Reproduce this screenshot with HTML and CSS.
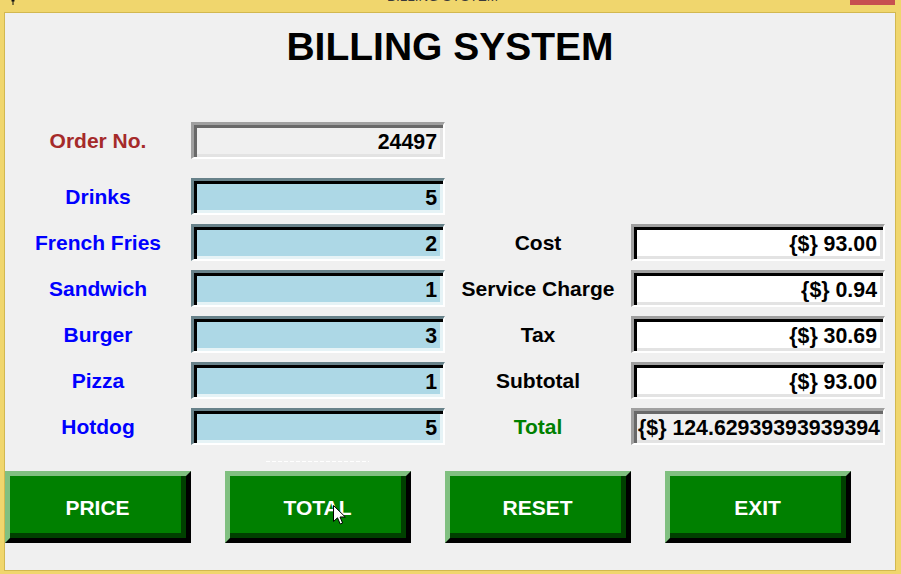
FILE: index.html
```html
<!DOCTYPE html>
<html>
<head>
<meta charset="utf-8">
<title>BILLING SYSTEM</title>
<link rel="stylesheet" href="styles.css">
</head>
<body>
<div class="titlebar">
  <span class="app-icon"><svg width="4" height="12" viewBox="0 0 4 12"><path d="M2 0 V5" stroke="#111" stroke-width="1"/><path d="M0.5 0 H3.5 V1.5 H0.5 Z" fill="#111"/></svg></span>
  <span class="caption">BILLING SYSTEM</span>
  <span class="close-btn"></span>
</div>
<div class="window">
  <h1 class="heading">BILLING SYSTEM</h1>

  <div class="form order-row">
    <div class="label brown">Order No.</div>
    <div class="field readonly">24497</div>
  </div>

  <div class="form items">
    <div class="label blue">Drinks</div>
    <div class="field blue-field">5</div>
    <div class="spacer"></div>

    <div class="label blue">French Fries</div>
    <div class="field blue-field">2</div>
    <div class="label black">Cost</div>
    <div class="field white-field">{$} 93.00</div>

    <div class="label blue">Sandwich</div>
    <div class="field blue-field">1</div>
    <div class="label black">Service Charge</div>
    <div class="field white-field">{$} 0.94</div>

    <div class="label blue">Burger</div>
    <div class="field blue-field">3</div>
    <div class="label black">Tax</div>
    <div class="field white-field">{$} 30.69</div>

    <div class="label blue">Pizza</div>
    <div class="field blue-field">1</div>
    <div class="label black">Subtotal</div>
    <div class="field white-field">{$} 93.00</div>

    <div class="label blue">Hotdog</div>
    <div class="field blue-field">5</div>
    <div class="label green">Total</div>
    <div class="field readonly total">{$} 124.62939393939394</div>
  </div>

  <div class="focus-line"></div>

  <div class="buttons">
    <div class="btn-frame"><button class="btn">PRICE</button></div>
    <div class="btn-frame"><button class="btn">TOTAL</button>
      <svg class="cursor" width="13" height="20" viewBox="0 0 13 20"><path d="M0.5 0.5 L0.5 16.5 L4.5 12.8 L7.2 19 L9.6 18 L7 12 L12.3 12 Z" fill="#fff" stroke="#000" stroke-width="1" stroke-linejoin="miter"/></svg>
    </div>
    <div class="btn-frame"><button class="btn">RESET</button></div>
    <div class="btn-frame"><button class="btn">EXIT</button></div>
  </div>
</div>
</body>
</html>
```
FILE: styles.css
```css
* { box-sizing: border-box; }

html, body {
  margin: 0;
  padding: 0;
}

body {
  width: 901px;
  height: 574px;
  background: #f0d66d;
  overflow: hidden;
  font-family: "Liberation Sans", Arial, sans-serif;
}

.titlebar {
  height: 12px;
  display: flex;
  align-items: flex-start;
  overflow: hidden;
}

.app-icon {
  width: 4px;
  height: 12px;
  margin-left: 11px;
  display: block;
}
.app-icon svg { display: block; }

.caption {
  flex: 1;
  text-align: center;
  font-size: 13.5px;
  line-height: 14px;
  margin-top: -10px;
  color: #3a3a3a;
  padding-left: 20px;
}

.close-btn {
  width: 45px;
  height: 5px;
  background: #c75050;
  margin-right: 6px;
}

.window {
  margin-left: 4px;
  width: 892px;
  height: 559px;
  border: 1px solid #d2b850;
  background: #f0f0f0;
}

.heading {
  margin: 0;
  padding-top: 11px;
  font-size: 39px;
  line-height: 46px;
  font-weight: bold;
  text-align: center;
  color: #000;
}

.form {
  display: grid;
  grid-template-columns: 186px 254px 186px 254px;
  grid-auto-rows: 37px;
  row-gap: 9px;
}

.order-row {
  margin-top: 52px;
  margin-bottom: 19px;
}

.spacer {
  grid-column: span 2;
}

.label {
  display: flex;
  align-items: center;
  justify-content: center;
  padding-top: 1px;
  font-size: 21px;
  font-weight: bold;
  white-space: nowrap;
}

.brown { color: #a52a2a; }
.blue { color: #0000ff; }
.black { color: #000; }
.green { color: #008000; }

.field {
  height: 37px;
  display: flex;
  align-items: center;
  justify-content: flex-end;
  padding: 1px 6px 0 3px;
  border-style: solid;
  border-width: 3px 2px 2px 3px;
  font-size: 21.33px;
  line-height: 26px;
  font-weight: bold;
  color: #000;
  white-space: nowrap;
  overflow: hidden;
}

.readonly {
  background: #f0f0f0;
  border-color: #a0a0a0 #ffffff #ffffff #a0a0a0;
  box-shadow: inset 3px 3px 0 #696969, inset -3px -3px 0 #e3e3e3;
}

.blue-field {
  background: #add8e6;
  border-color: #68828a #ffffff #ffffff #68828a;
  box-shadow: inset 3px 3px 0 #000000, inset -3px -3px 0 #e6f3f6;
}

.white-field {
  background: #ffffff;
  border-color: #a0a0a0 #ffffff #ffffff #a0a0a0;
  box-shadow: inset 3px 3px 0 #000000, inset -3px -3px 0 #e3e3e3;
}

.total {
  justify-content: flex-start;
  padding-left: 4px;
  padding-right: 0;
}

.focus-line {
  margin-top: 16px;
  margin-left: 261px;
  width: 103px;
  height: 1px;
  background: repeating-linear-gradient(90deg, #ffffff 0 4px, transparent 4px 6px);
}

.buttons {
  margin-top: 9px;
  display: flex;
  gap: 34px;
}

.btn-frame {
  position: relative;
  width: 186px;
  height: 72px;
  border-style: solid;
  border-width: 5px;
  border-color: #80c080 #000000 #000000 #80c080;
}

.btn {
  display: block;
  width: 100%;
  height: 100%;
  margin: 0;
  padding: 6px 0 0 4px;
  border-style: solid;
  border-width: 0 5px 5px 0;
  border-color: #004000;
  background: #008000;
  color: #ffffff;
  font-family: "Liberation Sans", Arial, sans-serif;
  font-size: 21px;
  font-weight: bold;
  cursor: default;
}

.cursor {
  position: absolute;
  left: 103px;
  top: 29px;
}
```
